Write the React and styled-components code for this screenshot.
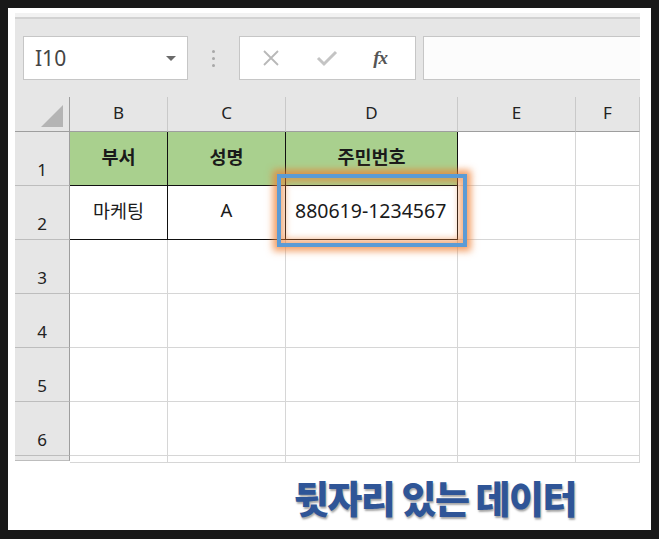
import React from 'react';
import styled, { createGlobalStyle } from 'styled-components';

const GlobalStyle = createGlobalStyle`
  html, body {
    margin: 0;
    padding: 0;
    background: #181818;
  }
  * {
    box-sizing: border-box;
  }
`;

const Frame = styled.div`
  width: 659px;
  height: 539px;
  padding: 8px 8px 9px 8px;
  background: #181818;
`;

const Panel = styled.div`
  width: 643px;
  height: 522px;
  background: #ffffff;
  padding: 5px 11px 0 7px;
  display: flex;
  flex-direction: column;
`;

const Sheet = styled.div`
  width: 625px;
  display: flex;
  flex-direction: column;
  font-family: "Noto Sans", "Noto Sans CJK KR", sans-serif;
`;

const TopStrip = styled.div`
  height: 6px;
  background: #f2f2f2;
  border-bottom: 2px solid #d2d2d2;
`;

const FormulaBar = styled.div`
  height: 78px;
  background: #e6e6e6;
  padding: 17px 0 17px 8px;
  display: flex;
  align-items: stretch;
`;

const Box = styled.div`
  background: #ffffff;
  border: 1px solid #c6c6c6;
  display: flex;
  align-items: center;
`;

const NameBox = styled(Box)`
  width: 165px;
  padding: 0 10px 0 11px;
  justify-content: space-between;
  font-size: 21px;
  color: #444;
`;

const Caret = styled.span`
  width: 0;
  height: 0;
  border-left: 5px solid transparent;
  border-right: 5px solid transparent;
  border-top: 5px solid #6a6a6a;
  margin-right: 1px;
`;

const Dots = styled.div`
  width: 51px;
  display: flex;
  flex-direction: column;
  align-items: center;
  justify-content: center;
  gap: 4px;
  span {
    width: 3px;
    height: 3px;
    border-radius: 50%;
    background: #a8a8a8;
  }
`;

const ButtonBox = styled(Box)`
  width: 177px;
  justify-content: space-around;
  padding: 0 10px 0 4px;
`;

const Fx = styled.span`
  font-family: "Liberation Serif", "DejaVu Serif", serif;
  font-style: italic;
  font-weight: bold;
  font-size: 19px;
  color: #555;
  letter-spacing: -1px;
`;

const FormulaInput = styled(Box)`
  flex: 1;
  margin-left: 7px;
  border-right: none;
  background: #fcfcfc;
`;

const Grid = styled.div`
  display: grid;
  grid-template-columns: 55px 98px 118px 172px 118px 64px;
  grid-template-rows: 35px repeat(6, 54px) 4px;
`;

const ColHead = styled.div`
  background: #e6e6e6;
  border-right: 1px solid #c9c9c9;
  border-bottom: 1px solid #9e9e9e;
  display: flex;
  align-items: center;
  justify-content: center;
  font-size: 17px;
  color: #222;
  padding-bottom: 4px;
`;

const Corner = styled(ColHead)`
  justify-content: flex-end;
  align-items: flex-end;
  padding: 0 6px 4px 0;
  border-right: 1px solid #9e9e9e;
`;

const RowHead = styled.div`
  background: #e6e6e6;
  border-right: 1px solid #9e9e9e;
  border-bottom: 1px solid #bdbdbd;
  display: flex;
  align-items: flex-end;
  justify-content: center;
  padding-bottom: 4px;
  font-size: 17px;
  color: #222;
`;

const Cell = styled.div`
  position: relative;
  border-right: 1px solid ${p => (p.$table ? '#111' : '#d6d6d6')};
  border-bottom: 1px solid ${p => (p.$table ? '#111' : '#d6d6d6')};
  background: ${p => (p.$head ? '#a9d08e' : '#fff')};
  display: flex;
  align-items: center;
  justify-content: ${p => (p.$left ? 'flex-start' : 'center')};
  padding: ${p => (p.$left ? '0 0 4px 9px' : '0 0 6px 0')};
  font-family: "Noto Sans", "Noto Sans CJK KR", sans-serif;
  font-size: ${p => (p.$left ? '19.5px' : '18.5px')};
  font-weight: ${p => (p.$head ? 700 : 400)};
  color: #1a1a1a;
`;

const Selection = styled.div`
  position: absolute;
  z-index: 5;
  top: -12px;
  left: -9px;
  right: -10px;
  bottom: -8px;
  border: 4px solid #5b9bd5;
  box-shadow: 0 0 7px 4px rgba(237, 125, 49, 0.75),
    inset 0 0 7px 4px rgba(237, 125, 49, 0.6);
  pointer-events: none;
`;

const CaptionRow = styled.div`
  flex: 1;
  display: flex;
  justify-content: flex-end;
  align-items: center;
  padding: 3px 64px 0 0;
`;

const Caption = styled.div`
  font-family: "Noto Sans CJK KR", sans-serif;
  font-weight: 900;
  font-size: 38px;
  letter-spacing: -1.5px;
  color: #2f5597;
  text-shadow: 1px 2px 2px rgba(0, 0, 0, 0.35);
`;

const cols = ['B', 'C', 'D', 'E', 'F'];

const rows = [
  [{ t: '부서', head: true, table: true }, { t: '성명', head: true, table: true }, { t: '주민번호', head: true, table: true }, {}, {}],
  [{ t: '마케팅', table: true }, { t: 'A', table: true }, { t: '880619-1234567', table: true, left: true, sel: true }, {}, {}],
  [{}, {}, {}, {}, {}],
  [{}, {}, {}, {}, {}],
  [{}, {}, {}, {}, {}],
  [{}, {}, {}, {}, {}],
];

function Triangle() {
  return (
    <svg width="22" height="22" viewBox="0 0 22 22">
      <polygon points="22,0 22,22 0,22" fill="#b4b4b4" />
    </svg>
  );
}

function Cross() {
  return (
    <svg width="18" height="18" viewBox="0 0 18 18">
      <path d="M2 2 L16 16 M16 2 L2 16" stroke="#b8b8b8" strokeWidth="1.8" fill="none" />
    </svg>
  );
}

function Check() {
  return (
    <svg width="22" height="18" viewBox="0 0 22 18">
      <path d="M2 9 L8 15 L20 3" stroke="#c4c4c4" strokeWidth="3" fill="none" />
    </svg>
  );
}

export default function App() {
  return (
    <>
      <GlobalStyle />
      <Frame>
        <Panel>
          <Sheet>
            <TopStrip />
            <FormulaBar>
              <NameBox>
                <span>I10</span>
                <Caret />
              </NameBox>
              <Dots>
                <span />
                <span />
                <span />
              </Dots>
              <ButtonBox>
                <Cross />
                <Check />
                <Fx>fx</Fx>
              </ButtonBox>
              <FormulaInput />
            </FormulaBar>
            <Grid>
              <Corner>
                <Triangle />
              </Corner>
              {cols.map(c => (
                <ColHead key={c}>{c}</ColHead>
              ))}
              {rows.map((r, i) => (
                <React.Fragment key={i}>
                  <RowHead>{i + 1}</RowHead>
                  {r.map((c, j) => (
                    <Cell key={j} $head={c.head} $table={c.table} $left={c.left}>
                      {c.t}
                      {c.sel && <Selection />}
                    </Cell>
                  ))}
                </React.Fragment>
              ))}
              <RowHead />
              {cols.map(c => (
                <Cell key={'x' + c} />
              ))}
            </Grid>
          </Sheet>
          <CaptionRow>
            <Caption>뒷자리 있는 데이터</Caption>
          </CaptionRow>
        </Panel>
      </Frame>
    </>
  );
}
